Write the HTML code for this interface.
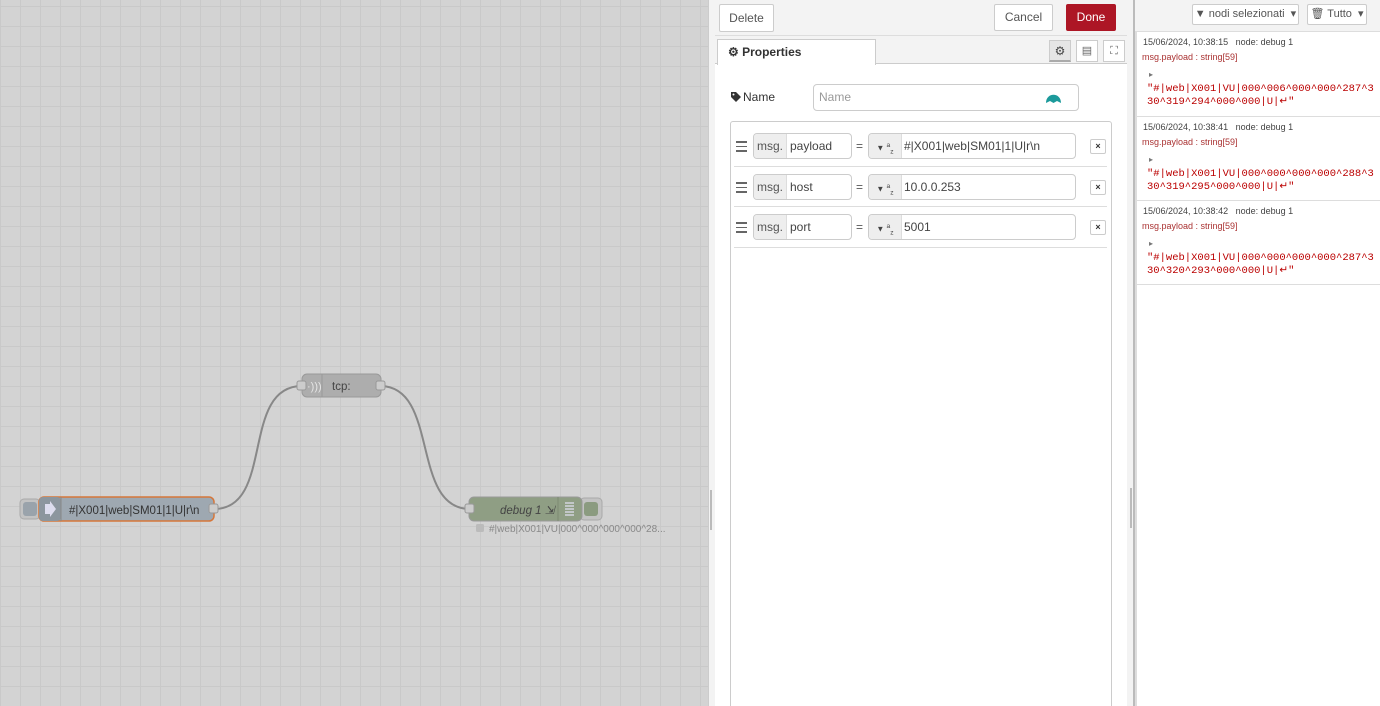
<!DOCTYPE html>
<html><head><meta charset="utf-8"><style>
*{box-sizing:border-box;margin:0;padding:0}
html,body{width:1380px;height:706px;overflow:hidden}
body{font-family:"Liberation Sans",sans-serif;position:relative;background:#fff;font-size:12px;color:#555}
.canvas{position:absolute;left:0;top:0;width:708px;height:706px;background-color:#d3d3d3;background-image:linear-gradient(#c9c9c9 1px,transparent 1px),linear-gradient(90deg,#c9c9c9 1px,transparent 1px);background-size:20px 20px;background-position:0 6px}
.abs{position:absolute}
.btn{position:absolute;border:1px solid #ccc;background:#fff;border-radius:2px;font-size:12px;color:#555;text-align:center;line-height:24px}
.row{position:absolute;left:736px;width:370px;height:40px}
.hand{position:absolute;left:0;top:8px;width:11px}
.hand i{display:block;height:1.5px;background:#666;margin-bottom:3px}
.inp{position:absolute;border:1px solid #ccc;border-radius:4px;background:#fff;height:26px;font-size:12px;color:#444}
.pre{position:absolute;left:0;top:0;bottom:0;width:33px;background:#eee;border-right:1px solid #ddd;border-radius:3px 0 0 3px;text-align:center;line-height:24px;color:#555}
.x{position:absolute;width:16px;height:15px;border:1px solid #ccc;border-radius:2px;font-size:9px;text-align:center;line-height:13px;color:#333;font-weight:bold}
.msg{position:absolute;left:1137px;width:243px;border-bottom:1px solid #ddd;background:#fff}
.msg .h{font-size:9px;color:#444;margin:5px 0 0 6px}
.msg .t{font-size:9px;color:#a33;margin:5px 0 0 5px}
.msg .a{font-size:8px;color:#777;margin:8px 0 0 12px;height:10px}
.msg .v{font-family:"Liberation Mono",monospace;font-size:10.5px;color:#b00;margin:3px 0 0 10px;line-height:13px;white-space:pre}
</style></head><body>
<div class="canvas"></div>
<svg class="abs" style="left:0;top:0" width="708" height="706">
<path d="M214 509 C 275 509, 240 386, 302 386" fill="none" stroke="#888" stroke-width="2"/>
<path d="M380 386 C 440 386, 410 509, 470 509" fill="none" stroke="#888" stroke-width="2"/>
<rect x="20" y="499" width="20" height="20" rx="4" fill="#c3c3c3" stroke="#aaa"/>
<rect x="23" y="502" width="14" height="14" rx="3" fill="#9aa3ab"/>
<rect x="39" y="497" width="175" height="24" rx="5" fill="#9ea8b1" stroke="#d6773b" stroke-width="1.5"/>
<rect x="39" y="497" width="22" height="24" rx="4" fill="#8c969e"/>
<line x1="61" y1="497" x2="61" y2="521" stroke="#888"/>
<path d="M45 504 h5 v-3 l6 8 l-6 8 v-3 h-5z" fill="#dde"/>
<text x="69" y="514" font-size="11.5" fill="#333" font-family="Liberation Sans">#|X001|web|SM01|1|U|r\n</text>
<rect x="209" y="504" width="9" height="9" rx="2" fill="#ccc" stroke="#999"/>
<rect x="302" y="374" width="79" height="23" rx="5" fill="#adadad" stroke="#999"/>
<line x1="322" y1="374" x2="322" y2="397" stroke="#999"/>
<text x="307" y="390" font-size="11" fill="#e5e5e5">·)))</text>
<text x="332" y="390" font-size="11.5" fill="#444">tcp:</text>
<rect x="297" y="381" width="9" height="9" rx="2" fill="#ccc" stroke="#999"/>
<rect x="376" y="381" width="9" height="9" rx="2" fill="#ccc" stroke="#999"/>
<rect x="580" y="498" width="22" height="22" rx="4" fill="#c3c3c3" stroke="#aaa"/>
<rect x="584" y="502" width="14" height="14" rx="3" fill="#8b9b80"/>
<rect x="469" y="497" width="113" height="24" rx="5" fill="#8f9e84" stroke="#999"/>
<line x1="558" y1="497" x2="558" y2="521" stroke="#7c8a72"/>
<g stroke="#dde" stroke-width="1.3"><line x1="565" y1="503" x2="574" y2="503"/><line x1="565" y1="506" x2="574" y2="506"/><line x1="565" y1="509" x2="574" y2="509"/><line x1="565" y1="512" x2="574" y2="512"/><line x1="565" y1="515" x2="574" y2="515"/></g>
<text x="500" y="514" font-size="11.5" font-style="italic" fill="#444">debug 1 ⇲</text>
<rect x="465" y="504" width="9" height="9" rx="2" fill="#ccc" stroke="#999"/>
<rect x="476" y="524" width="8" height="8" rx="1.5" fill="#bbb"/>
<text x="489" y="532" font-size="10" fill="#888">#|web|X001|VU|000^000^000^000^28...</text>
</svg>
<!-- splitters -->
<div class="abs" style="left:708px;top:0;width:7px;height:706px;background:#f3f3f3;border-left:1px solid #ccc"></div>
<div class="abs" style="left:710px;top:490px;width:2px;height:40px;background:#bbb"></div>
<div class="abs" style="left:1127px;top:0;width:8px;height:706px;background:#f3f3f3;border-right:2px solid #bbb"></div>
<div class="abs" style="left:1130px;top:488px;width:2px;height:40px;background:#bbb"></div>
<!-- tray -->
<div class="abs" style="left:715px;top:0;width:412px;height:36px;background:#f3f3f3;border-bottom:1px solid #ddd"></div>
<div class="btn" style="left:719px;top:4px;width:55px;height:28px;line-height:27px">Delete</div>
<div class="btn" style="left:994px;top:4px;width:59px;height:27px">Cancel</div>
<div class="btn" style="left:1066px;top:4px;width:50px;height:27px;background:#ad1625;border-color:#ad1625;color:#fff">Done</div>
<div class="abs" style="left:715px;top:36px;width:412px;height:28px;background:#f3f3f3;border-bottom:1px solid #ccc"></div>
<div class="abs" style="left:717px;top:39px;width:159px;height:26px;background:#fff;border:1px solid #ccc;border-bottom:none;font-weight:bold;color:#333;font-size:12px;line-height:24px;padding-left:10px">⚙ Properties</div>
<div class="abs" style="left:1049px;top:40px;width:22px;height:22px;background:#e6e6e6;border:1px solid #ccc;border-bottom:2px solid #aaa;text-align:center;line-height:20px;font-size:12px;color:#444">⚙</div>
<div class="abs" style="left:1076px;top:40px;width:22px;height:22px;border:1px solid #ccc;background:#fff;text-align:center;line-height:20px;font-size:11px;color:#666">▤</div>
<div class="abs" style="left:1103px;top:40px;width:22px;height:22px;border:1px solid #ccc;background:#fff;text-align:center;line-height:20px;font-size:11px;color:#666">⛶</div>
<div class="abs" style="left:743px;top:90px;font-size:12px;color:#333">Name</div>
<svg class="abs" style="left:730px;top:91px" width="12" height="12"><path d="M1 1h5l5 5-5 5-5-5z" fill="#333"/><circle cx="3.5" cy="3.5" r="1" fill="#fff"/></svg>
<div class="inp" style="left:813px;top:84px;width:266px;height:27px;line-height:25px;padding-left:5px;color:#999">Name</div>
<svg class="abs" style="left:1045px;top:90px" width="17" height="14"><path d="M1 13 C1 2,16 2,16 13 L12 11 L8.5 13 L5 11Z" fill="#1c9a9b"/></svg>
<div class="abs" style="left:730px;top:121px;width:382px;height:590px;border:1px solid #ccc;border-radius:3px"></div>
<div class="abs" style="left:734px;top:166px;width:373px;height:1px;background:#ddd"></div>
<div class="abs" style="left:734px;top:206px;width:373px;height:1px;background:#ddd"></div>
<div class="abs" style="left:734px;top:247px;width:373px;height:1px;background:#ddd"></div>
<!-- rows -->
<div class="row" style="top:133px"><div class="hand"><i></i><i></i><i></i></div>
<div class="inp" style="left:17px;top:0;width:99px"><div class="pre">msg.</div><span style="position:absolute;left:36px;top:5px">payload</span></div>
<span style="position:absolute;left:120px;top:6px">=</span>
<div class="inp" style="left:132px;top:0;width:208px"><div class="pre" style="font-size:8px;color:#444">▼ <sup>a</sup><sub>z</sub></div><span style="position:absolute;left:35px;top:5px">#|X001|web|SM01|1|U|r\n</span></div>
<div class="x" style="left:354px;top:6px">×</div></div>
<div class="row" style="top:174px"><div class="hand"><i></i><i></i><i></i></div>
<div class="inp" style="left:17px;top:0;width:99px"><div class="pre">msg.</div><span style="position:absolute;left:36px;top:5px">host</span></div>
<span style="position:absolute;left:120px;top:6px">=</span>
<div class="inp" style="left:132px;top:0;width:208px"><div class="pre" style="font-size:8px;color:#444">▼ <sup>a</sup><sub>z</sub></div><span style="position:absolute;left:35px;top:5px">10.0.0.253</span></div>
<div class="x" style="left:354px;top:6px">×</div></div>
<div class="row" style="top:214px"><div class="hand"><i></i><i></i><i></i></div>
<div class="inp" style="left:17px;top:0;width:99px"><div class="pre">msg.</div><span style="position:absolute;left:36px;top:5px">port</span></div>
<span style="position:absolute;left:120px;top:6px">=</span>
<div class="inp" style="left:132px;top:0;width:208px"><div class="pre" style="font-size:8px;color:#444">▼ <sup>a</sup><sub>z</sub></div><span style="position:absolute;left:35px;top:5px">5001</span></div>
<div class="x" style="left:354px;top:6px">×</div></div>
<!-- sidebar -->
<div class="abs" style="left:1135px;top:0;width:245px;height:32px;background:#f3f3f3;border-bottom:1px solid #ddd"></div>
<div class="btn" style="left:1192px;top:4px;width:107px;height:21px;line-height:19px;font-size:11px">▼ nodi selezionati &nbsp;▾</div>
<div class="btn" style="left:1307px;top:4px;width:60px;height:21px;line-height:19px;font-size:11px">🗑︎ Tutto &nbsp;▾</div>
<div class="abs" style="left:1135px;top:32px;width:2px;height:674px;background:#ddd"></div>
<div class="msg" style="top:32px;height:85px"><div class="h">15/06/2024, 10:38:15 &nbsp;&nbsp;node: debug 1</div><div class="t">msg.payload : string[59]</div><div class="a">▸</div><div class="v">"#|web|X001|VU|000^006^000^000^287^3
30^319^294^000^000|U|↵"</div></div>
<div class="msg" style="top:117px;height:84px"><div class="h">15/06/2024, 10:38:41 &nbsp;&nbsp;node: debug 1</div><div class="t">msg.payload : string[59]</div><div class="a">▸</div><div class="v">"#|web|X001|VU|000^000^000^000^288^3
30^319^295^000^000|U|↵"</div></div>
<div class="msg" style="top:201px;height:84px"><div class="h">15/06/2024, 10:38:42 &nbsp;&nbsp;node: debug 1</div><div class="t">msg.payload : string[59]</div><div class="a">▸</div><div class="v">"#|web|X001|VU|000^000^000^000^287^3
30^320^293^000^000|U|↵"</div></div>
</body></html>
